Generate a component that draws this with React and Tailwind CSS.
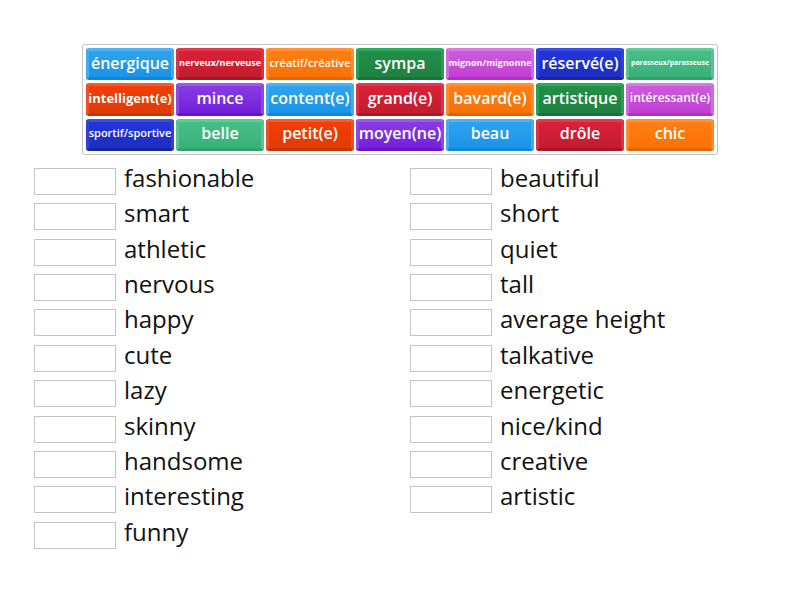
const COLORS = {
  blue: 'from-[#32a4ec] to-[#1592e8] border-t-[#4fb2f0] border-x-[#43abee] border-b-[#1087d8]',
  red: 'from-[#dc2138] to-[#c01c2e] border-t-[#e03a4f] border-x-[#d93247] border-b-[#a81726]',
  orange: 'from-[#ff8015] to-[#f87004] border-t-[#ff9234] border-x-[#ff8a29] border-b-[#e46500]',
  green: 'from-[#229049] to-[#1f7f40] border-t-[#2bac5a] border-x-[#27a053] border-b-[#1c7039]',
  pink: 'from-[#cd5fdc] to-[#c03ad3] border-t-[#d67be1] border-x-[#cf6cdc] border-b-[#b32fc5]',
  navy: 'from-[#2336dc] to-[#1d2dbd] border-t-[#3a4ce2] border-x-[#3040d2] border-b-[#1825a2]',
  mint: 'from-[#47c088] to-[#39af78] border-t-[#62ca99] border-x-[#56c392] border-b-[#319f6a]',
  rust: 'from-[#f43e08] to-[#df3b04] border-t-[#f65a2d] border-x-[#ee4f20] border-b-[#c63603]',
  purple: 'from-[#8a3ee6] to-[#7219da] border-t-[#9a5bea] border-x-[#8c48e4] border-b-[#6413c6]',
};

// long words step down so that they still fit on one line
const SIZES = {
  lg: 'text-[16px] font-semibold',
  md: 'text-[13px] font-bold',
  sm: 'text-[12px] font-semibold',
  xs: 'text-[11px] font-semibold',
  xxs: 'text-[9px] font-bold',
  tiny: 'text-[7px] font-bold',
};

const TILES = [
  { text: 'énergique', color: 'blue', size: 'lg' },
  { text: 'nerveux/nerveuse', color: 'red', size: 'xxs' },
  { text: 'créatif/créative', color: 'orange', size: 'xs' },
  { text: 'sympa', color: 'green', size: 'lg' },
  { text: 'mignon/mignonne', color: 'pink', size: 'xxs' },
  { text: 'réservé(e)', color: 'navy', size: 'lg' },
  { text: 'parasseux/parasseuse', color: 'mint', size: 'tiny' },
  { text: 'intelligent(e)', color: 'rust', size: 'md' },
  { text: 'mince', color: 'purple', size: 'lg' },
  { text: 'content(e)', color: 'blue', size: 'lg' },
  { text: 'grand(e)', color: 'red', size: 'lg' },
  { text: 'bavard(e)', color: 'orange', size: 'lg' },
  { text: 'artistique', color: 'green', size: 'lg' },
  { text: 'intéressant(e)', color: 'pink', size: 'sm' },
  { text: 'sportif/sportive', color: 'navy', size: 'xs' },
  { text: 'belle', color: 'mint', size: 'lg' },
  { text: 'petit(e)', color: 'rust', size: 'lg' },
  { text: 'moyen(ne)', color: 'purple', size: 'lg' },
  { text: 'beau', color: 'blue', size: 'lg' },
  { text: 'drôle', color: 'red', size: 'lg' },
  { text: 'chic', color: 'orange', size: 'lg' },
];

const LEFT = [
  'fashionable',
  'smart',
  'athletic',
  'nervous',
  'happy',
  'cute',
  'lazy',
  'skinny',
  'handsome',
  'interesting',
  'funny',
];

const RIGHT = [
  'beautiful',
  'short',
  'quiet',
  'tall',
  'average height',
  'talkative',
  'energetic',
  'nice/kind',
  'creative',
  'artistic',
];

function Tile({ text, color, size }) {
  return (
    <button
      type="button"
      className={`flex items-center justify-center rounded-[3px] border-[3px] bg-linear-to-b bg-origin-border pb-[3px] leading-[20px] whitespace-nowrap text-white ${COLORS[color]} ${SIZES[size]}`}
    >
      {text}
    </button>
  );
}

function Definitions({ words }) {
  return (
    <ul className="grid min-h-[389px] grid-rows-11">
      {words.map((word) => (
        <li key={word} className="flex items-start">
          <input
            id={word}
            type="text"
            readOnly
            className="h-[27px] w-[82px] shrink-0 border border-[#c4c4c4] bg-white"
          />
          <label htmlFor={word} className="pl-2 text-[24px] leading-[20px] text-[#111]">
            {word}
          </label>
        </li>
      ))}
    </ul>
  );
}

export default function App() {
  return (
    <main className="min-h-screen bg-white pt-[44px] font-['Open_Sans',sans-serif]">
      <div className="mx-auto grid min-h-[111px] w-fit auto-rows-fr grid-cols-[repeat(7,88px)] gap-x-[2px] gap-y-[3px] rounded-[3px] border border-[#c4c4c4] p-[3px]">
        {TILES.map((tile) => (
          <Tile key={tile.text} {...tile} />
        ))}
      </div>
      <div className="mt-[13px] grid grid-cols-2 pr-[14px] pl-[34px]">
        <Definitions words={LEFT} />
        <Definitions words={RIGHT} />
      </div>
    </main>
  );
}
